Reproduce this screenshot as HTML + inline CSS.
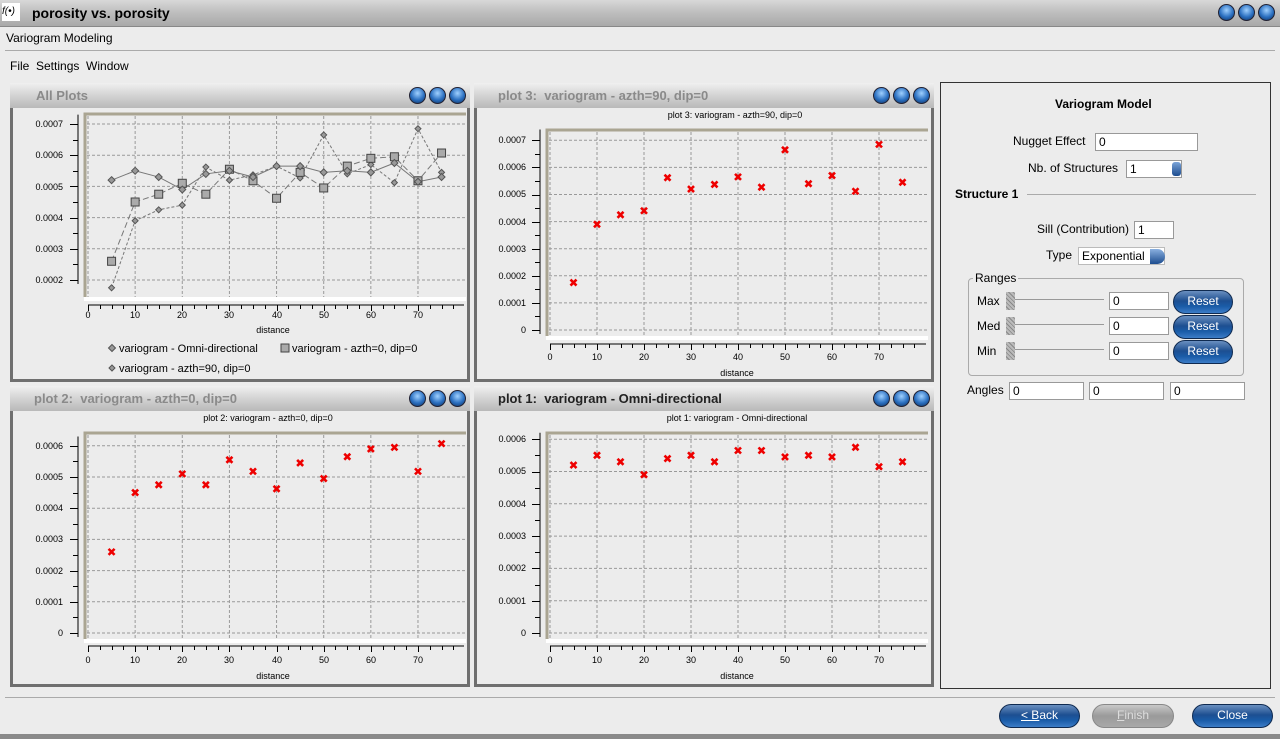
<!DOCTYPE html>
<html><head><meta charset="utf-8">
<style>
*{margin:0;padding:0;box-sizing:border-box}
body{width:1280px;height:739px;overflow:hidden;background:#ececec;font-family:"Liberation Sans","Noto Sans CJK JP",sans-serif;font-size:12px;color:#000;position:relative}
.abs{position:absolute}
.titlebar{left:0;top:0;width:1280px;height:27px;background:linear-gradient(#d8d8d8,#bdbdbd 50%,#a9a9a9);border-bottom:1px solid #888}
.tb3 span{display:inline-block;width:17px;height:17px;border-radius:50%;margin-left:3px;background:radial-gradient(circle at 50% 35%,#9fd0ff,#2a6fc0 55%,#0f2f5c);border:1px solid #223}
.frame{background:#ececec;border:3px solid #6f6f6f;border-top:none}
.fhead{left:0;top:0;height:25px;background:linear-gradient(#f0f0f0,#d3d3d3 50%,#b9b9b9);font-weight:bold;font-size:13px;color:#8a8a8a;padding:5px 0 0 24px}
.fhead.act{color:#222}
.fhead .tb3{position:absolute;right:4px;top:4px}
.inp{background:#fff;border:1px solid #999;height:18px;font-size:12px;padding:1px 3px;line-height:15px}
.btn{border-radius:12px;background:linear-gradient(#6a8fc0,#1d4f91 45%,#1a5ca8 70%,#3b7cc7);border:1px solid #0f2a50;color:#fff;text-align:center;font-size:12px;line-height:21px;height:24px}
.btn.dis{background:linear-gradient(#c8c8c8,#9a9a9a 50%,#a8a8a8);border-color:#888;color:#ddd}
</style></head><body>

<div class="abs titlebar">
  <div class="abs" style="left:2px;top:3px;width:18px;height:18px;background:#fff;font-size:10px;font-style:italic;line-height:18px">f(•)</div>
  <div class="abs" style="left:32px;top:5px;font-weight:bold;font-size:14px">porosity vs. porosity</div>
  <div class="abs tb3" style="right:5px;top:4px"><span></span><span></span><span></span></div>
</div>
<div class="abs" style="left:6px;top:31px">Variogram Modeling</div>
<div class="abs" style="left:5px;top:50px;width:1270px;height:1px;background:#aaa"></div>
<div class="abs" style="left:10px;top:59px">File&nbsp;&nbsp;Settings&nbsp;&nbsp;Window</div>

<div class="abs frame" style="left:10px;top:83px;width:460px;height:299px"><div class="abs fhead" style="width:460px;left:-3px;padding-left:26px">All Plots<div class="tb3"><span></span><span></span><span></span></div></div></div>
<div class="abs frame" style="left:474px;top:83px;width:460px;height:299px"><div class="abs fhead" style="width:460px;left:-3px">plot 3:&nbsp; variogram - azth=90, dip=0<div class="tb3"><span></span><span></span><span></span></div></div></div>
<div class="abs frame" style="left:10px;top:386px;width:460px;height:301px"><div class="abs fhead" style="width:460px;left:-3px">plot 2:&nbsp; variogram - azth=0, dip=0<div class="tb3"><span></span><span></span><span></span></div></div></div>
<div class="abs frame" style="left:474px;top:386px;width:460px;height:301px"><div class="abs fhead act" style="width:460px;left:-3px">plot 1:&nbsp; variogram - Omni-directional<div class="tb3"><span></span><span></span><span></span></div></div></div>

<svg class="abs" id="plots" style="left:0;top:0" width="1280" height="739" font-family="Liberation Sans, sans-serif" font-size="9">
<g id="shapes"></g>
<g text-anchor="middle">
<text x="735" y="118">plot 3:  variogram - azth=90, dip=0</text>
<text x="268" y="421">plot 2:  variogram - azth=0, dip=0</text>
<text x="737" y="421">plot 1:  variogram - Omni-directional</text>
<text x="273" y="333">distance</text><text x="737" y="376">distance</text>
<text x="273" y="679">distance</text><text x="737" y="679">distance</text>
<text x="88" y="318">0</text><text x="135" y="318">10</text><text x="182" y="318">20</text><text x="229" y="318">30</text><text x="277" y="318">40</text><text x="324" y="318">50</text><text x="371" y="318">60</text><text x="418" y="318">70</text>
<text x="550" y="360">0</text><text x="597" y="360">10</text><text x="644" y="360">20</text><text x="691" y="360">30</text><text x="738" y="360">40</text><text x="785" y="360">50</text><text x="832" y="360">60</text><text x="879" y="360">70</text>
<text x="88" y="663">0</text><text x="135" y="663">10</text><text x="182" y="663">20</text><text x="229" y="663">30</text><text x="277" y="663">40</text><text x="324" y="663">50</text><text x="371" y="663">60</text><text x="418" y="663">70</text>
<text x="550" y="663">0</text><text x="597" y="663">10</text><text x="644" y="663">20</text><text x="691" y="663">30</text><text x="738" y="663">40</text><text x="785" y="663">50</text><text x="832" y="663">60</text><text x="879" y="663">70</text>
</g>
<g text-anchor="end">
<text x="63" y="127">0.0007</text><text x="63" y="158">0.0006</text><text x="63" y="190">0.0005</text><text x="63" y="221">0.0004</text><text x="63" y="252">0.0003</text><text x="63" y="283">0.0002</text>
<text x="526" y="143">0.0007</text><text x="526" y="170">0.0006</text><text x="526" y="197">0.0005</text><text x="526" y="225">0.0004</text><text x="526" y="252">0.0003</text><text x="526" y="279">0.0002</text><text x="526" y="306">0.0001</text><text x="526" y="333">0</text>
<text x="63" y="449">0.0006</text><text x="63" y="480">0.0005</text><text x="63" y="511">0.0004</text><text x="63" y="542">0.0003</text><text x="63" y="574">0.0002</text><text x="63" y="605">0.0001</text><text x="63" y="636">0</text>
<text x="526" y="442">0.0006</text><text x="526" y="474">0.0005</text><text x="526" y="507">0.0004</text><text x="526" y="539">0.0003</text><text x="526" y="571">0.0002</text><text x="526" y="604">0.0001</text><text x="526" y="636">0</text>
</g>
<g font-size="11">
<text x="119" y="352">variogram - Omni-directional</text>
<text x="292" y="352">variogram - azth=0, dip=0</text>
<text x="119" y="372">variogram - azth=90, dip=0</text>
</g>
</svg>

<!-- right panel -->
<div class="abs" style="left:940px;top:82px;width:331px;height:607px;border:1px solid #333;background:#ececec">
  <div class="abs" style="left:114px;top:14px;font-weight:bold">Variogram Model</div>
  <div class="abs" style="left:72px;top:51px">Nugget Effect</div>
  <div class="abs inp" style="left:154px;top:50px;width:103px">0</div>
  <div class="abs" style="left:87px;top:78px">Nb. of Structures</div>
  <div class="abs inp" style="left:185px;top:77px;width:56px">1</div>
  <div class="abs" style="left:231px;top:79px;width:9px;height:14px;border-radius:3px;background:linear-gradient(#7aa3d8,#1c4c8f)"></div>
  <div class="abs" style="left:14px;top:104px;font-weight:bold">Structure 1</div>
  <div class="abs" style="left:86px;top:111px;width:229px;height:1px;background:#aaa"></div>
  <div class="abs" style="left:96px;top:139px">Sill (Contribution)</div>
  <div class="abs inp" style="left:193px;top:138px;width:40px">1</div>
  <div class="abs" style="left:105px;top:165px">Type</div>
  <div class="abs inp" style="left:137px;top:164px;width:87px;border-color:#bbb">Exponential</div>
  <div class="abs" style="left:209px;top:166px;width:15px;height:15px;border-radius:0 8px 8px 0;background:linear-gradient(#8ab0e0,#1c4c8f)"></div>
  <div class="abs" style="left:27px;top:195px;width:276px;height:98px;border:1px solid #aaa;border-radius:4px"></div>
  <div class="abs" style="left:32px;top:188px;background:#ececec;padding:0 2px">Ranges</div>
  <div class="abs" style="left:36px;top:211px">Max</div><div class="abs" style="left:36px;top:236px">Med</div><div class="abs" style="left:36px;top:261px">Min</div>
  <div class="abs" style="left:65px;top:209px;width:9px;height:18px;background:repeating-linear-gradient(45deg,#bbb 0 2px,#888 2px 3px)"></div>
  <div class="abs" style="left:65px;top:234px;width:9px;height:18px;background:repeating-linear-gradient(45deg,#bbb 0 2px,#888 2px 3px)"></div>
  <div class="abs" style="left:65px;top:259px;width:9px;height:18px;background:repeating-linear-gradient(45deg,#bbb 0 2px,#888 2px 3px)"></div>
  <div class="abs" style="left:74px;top:216px;width:89px;height:1px;background:#999"></div>
  <div class="abs" style="left:74px;top:241px;width:89px;height:1px;background:#999"></div>
  <div class="abs" style="left:74px;top:266px;width:89px;height:1px;background:#999"></div>
  <div class="abs inp" style="left:168px;top:209px;width:60px">0</div>
  <div class="abs inp" style="left:168px;top:234px;width:60px">0</div>
  <div class="abs inp" style="left:168px;top:259px;width:60px">0</div>
  <div class="abs btn" style="left:232px;top:207px;width:60px">Reset</div>
  <div class="abs btn" style="left:232px;top:232px;width:60px">Reset</div>
  <div class="abs btn" style="left:232px;top:257px;width:60px">Reset</div>
  <div class="abs" style="left:26px;top:300px">Angles</div>
  <div class="abs inp" style="left:68px;top:299px;width:75px">0</div>
  <div class="abs inp" style="left:148px;top:299px;width:75px">0</div>
  <div class="abs inp" style="left:229px;top:299px;width:75px">0</div>
</div>

<div class="abs" style="left:5px;top:697px;width:1270px;height:1px;background:#aaa"></div>
<div class="abs btn" style="left:999px;top:704px;width:81px"><span style="text-decoration:underline">&lt; B</span>ack</div>
<div class="abs btn dis" style="left:1092px;top:704px;width:82px"><u>F</u>inish</div>
<div class="abs btn" style="left:1192px;top:704px;width:81px">Close</div>
<div class="abs" style="left:0;top:734px;width:1280px;height:5px;background:#8a8a8a"></div>

<script>
var NS="http://www.w3.org/2000/svg",G=document.getElementById("shapes");
function el(t,a){var e=document.createElementNS(NS,t);for(var k in a)e.setAttribute(k,a[k]);G.appendChild(e);return e;}
function plot(c){
 var b=c.box;
 el("rect",{x:b[0],y:b[1],width:b[2]-b[0],height:b[3]-b[1],fill:"#ececec"});
 el("path",{d:"M"+(b[0]+1)+" "+b[3]+"V"+(b[1]+1)+"H"+b[2],stroke:"#aaa592",fill:"none","stroke-width":3});
 el("rect",{x:b[0],y:b[3],width:b[2]-b[0],height:4,fill:"#fff"});
 var d="";
 for(var x=0;x<=75;x+=10){var px=c.x0+c.sx*x;d+="M"+px+" "+(b[1]+3)+"V"+b[3];}
 c.yl.forEach(function(k){var py=c.y0-c.sy*k;d+="M"+(b[0]+3)+" "+py+"H"+b[2];});
 el("path",{d:d,stroke:"#999","stroke-dasharray":"3,2",fill:"none","stroke-width":1});
 var ax=b[0]-6,ay=c.xa,t="M"+ax+" "+(c.y0-c.sy*c.ytop)+"V"+(c.y0-c.sy*c.yl[0]+4);
 for(var k=c.yl[0];k<=c.ytop;k+=0.5){var py=Math.round(c.y0-c.sy*k)+0.5;t+="M"+ax+" "+py+"H"+(ax-(k%1?5:8));}
 t+="M"+c.x0+" "+ay+"H"+(b[2]-2);
 for(var x=0;x<=78;x+=2.5){var px=Math.round(c.x0+c.sx*x)+0.5;t+="M"+px+" "+ay+"V"+(ay+(x%10?4:6));}
 el("path",{d:t,stroke:"#000",fill:"none","stroke-width":1});
}
function X(cx,cy){el("path",{d:"M"+(cx-3)+" "+(cy-3)+"L"+(cx+3)+" "+(cy+3)+"M"+(cx+3)+" "+(cy-3)+"L"+(cx-3)+" "+(cy+3),stroke:"#e00",
"stroke-width":2.6,fill:"none"});}
var omni=[5.2,5.5,5.3,4.9,5.4,5.5,5.3,5.65,5.65,5.45,5.5,5.45,5.75,5.15,5.3];
var az0=[2.6,4.5,4.75,5.1,4.75,5.55,5.18,4.62,5.45,4.95,5.65,5.9,5.95,5.18,6.07];
var az90=[1.75,3.9,4.25,4.4,5.62,5.2,5.37,5.65,5.27,6.65,5.4,5.7,5.12,6.85,5.45];
var P3={box:[546,129,928,336],x0:550,sx:4.7,y0:330,sy:27.1,yl:[0,1,2,3,4,5,6,7],ytop:7.4,xa:344};
var P2={box:[84,432,466,639],x0:88,sx:4.714,y0:633,sy:31.2,yl:[0,1,2,3,4,5,6],ytop:6.3,xa:646};
var P1={box:[546,432,928,639],x0:550,sx:4.7,y0:633,sy:32.3,yl:[0,1,2,3,4,5,6],ytop:6.2,xa:646};
var PA={box:[84,113,466,297],x0:88,sx:4.714,y0:342.4,sy:31.2,yl:[2,3,4,5,6,7],ytop:7.3,xa:305};
[P3,P2,P1,PA].forEach(plot);
function pts(c,arr){return arr.map(function(v,i){return [c.x0+c.sx*5*(i+1),c.y0-c.sy*v];});}
[[P3,az90],[P2,az0],[P1,omni]].forEach(function(p){pts(p[0],p[1]).forEach(function(q){X(q[0],q[1]);});});
function line(ps,dash){el("path",{d:"M"+ps.map(function(q){return q.join(" ")}).join("L"),stroke:"#777",fill:"none","stroke-dasharray":dash||"none"});}
function dia(x,y,r){el("path",{d:"M"+x+" "+(y-r)+"L"+(x+r)+" "+y+"L"+x+" "+(y+r)+"L"+(x-r)+" "+y+"Z",fill:"#999",stroke:"#555"});}
function sq(x,y){el("rect",{x:x-4,y:y-4,width:8,height:8,fill:"#aaa",stroke:"#444"});}
var a=pts(PA,omni),b=pts(PA,az0),c=pts(PA,az90);
line(a);line(b,"6,3");line(c,"3,2");
c.forEach(function(q){dia(q[0],q[1],3);});b.forEach(function(q){sq(q[0],q[1]);});a.forEach(function(q){dia(q[0],q[1],3.5);});
dia(112,348,3.5);sq(285,348);dia(112,368,3);
</script>
</body></html>
